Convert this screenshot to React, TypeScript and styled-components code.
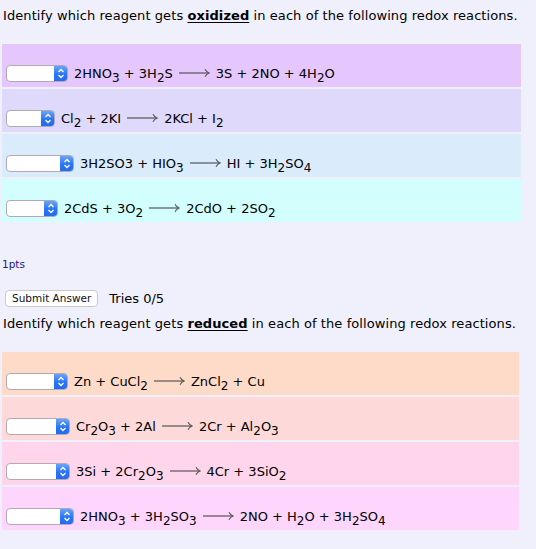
import React from 'react';
import styled, { createGlobalStyle } from 'styled-components';

const Global = createGlobalStyle`
  html, body { margin: 0; padding: 0; background: #eff0fc; }
  body { font-family: "DejaVu Sans", Verdana, sans-serif; color: #000; }
`

type Part = string | [string, string]
type Reaction = { left: Part[]; right: Part[]; pick: number; bg: string }

// plain text, or [text, subscript]
const oxidized: Reaction[] = [
  { bg: '#e5c6fd', pick: 62, left: [['2HNO', '3'], ' + 3H', ['', '2'], 'S'], right: ['3S + 2NO + 4H', ['', '2'], 'O'] },
  { bg: '#dfd9fb', pick: 49, left: [['Cl', '2'], ' + 2KI'], right: ['2KCl + I', ['', '2']] },
  { bg: '#daebfc', pick: 68, left: ['3H2SO3 + HIO', ['', '3']], right: ['HI + 3H', ['', '2'], 'SO', ['', '4']] },
  { bg: '#d3fefe', pick: 52, left: ['2CdS + 3O', ['', '2']], right: ['2CdO + 2SO', ['', '2']] },
]

const reduced: Reaction[] = [
  { bg: '#fedbc9', pick: 62, left: ['Zn + CuCl', ['', '2']], right: ['ZnCl', ['', '2'], ' + Cu'] },
  { bg: '#fed9d9', pick: 64, left: ['Cr', ['', '2'], 'O', ['', '3'], ' + 2Al'], right: ['2Cr + Al', ['', '2'], 'O', ['', '3']] },
  { bg: '#fed5eb', pick: 64, left: ['3Si + 2Cr', ['', '2'], 'O', ['', '3']], right: ['4Cr + 3SiO', ['', '2']] },
  { bg: '#fed5fc', pick: 68, left: ['2HNO', ['', '3'], ' + 3H', ['', '2'], 'SO', ['', '3']], right: ['2NO + H', ['', '2'], 'O + 3H', ['', '2'], 'SO', ['', '4']] },
]

const Formula = ({ parts }: { parts: Part[] }) => <span>
  {parts.map((p, i) => typeof p === 'string'
    ? <React.Fragment key={i}>{p.replace(/ /g, '\u00a0')}</React.Fragment>
    : <React.Fragment key={i}>{p[0]}<Sub>{p[1]}</Sub></React.Fragment>)}
</span>

const Arrow = () => <ArrowBox width='31' height='10' viewBox='0 0 31 10'>
  <line x1='0' y1='5' x2='29.5' y2='5' stroke='#555' strokeWidth='1.2' />
  <path d='M26 1.2 Q27.6 4 30 5 Q27.6 6 26 8.8' fill='none' stroke='#555' strokeWidth='1.1' />
</ArrowBox>

const Picker = ({ width }: { width: number }) => <Select $w={width}>
  <span className='field' />
  <span className='knob'>
    <svg width='8' height='11' viewBox='0 0 8 11'>
      <path d='M1.5 4 L4 1.5 L6.5 4 M1.5 7 L4 9.5 L6.5 7' fill='none' stroke='#fff' strokeWidth='1.3' />
    </svg>
  </span>
</Select>

const Section = ({ rows, width }: { rows: Reaction[]; width: number }) => <Rows $w={width}>
  {rows.map((r, i) => <Row key={i} $bg={r.bg}>
    <Picker width={r.pick} />
    <Equation>
      <Formula parts={r.left} />
      <Arrow />
      <Formula parts={r.right} />
    </Equation>
  </Row>)}
</Rows>

export default function App() {
  return <Page>
    <Global />
    <Prompt>Identify which reagent gets <b>oxidized</b> in each of the following redox reactions.</Prompt>
    <Section rows={oxidized} width={519} />
    <Points>1pts</Points>
    <Actions>
      <Button>Submit Answer</Button>
      <span>Tries 0/5</span>
    </Actions>
    <Prompt $top={9}>Identify which reagent gets <b>reduced</b> in each of the following redox reactions.</Prompt>
    <Section rows={reduced} width={517} />
  </Page>
}

const Page = styled.div`
  width: 536px; height: 549px;
  box-sizing: border-box;
  padding: 0 0 0 2px;
  overflow: hidden;
`

const Prompt = styled.div<{ $top?: number }>`
  margin-top: ${p => p.$top ?? 8}px;
  padding-left: 1px;
  font-size: 13px;
  line-height: 16px;
  letter-spacing: 0.08px;
  white-space: nowrap;
  b { text-decoration: underline; text-underline-offset: 2px; }
`

const Rows = styled.div<{ $w: number }>`
  display: flex;
  flex-direction: column;
  gap: 2px;
  width: ${p => p.$w}px;
  margin-top: 20px;
`

const Row = styled.div<{ $bg: string }>`
  display: flex;
  align-items: flex-end;
  gap: 6px;
  height: 43px;
  box-sizing: border-box;
  padding: 0 0 5px 4px;
  background: ${p => p.$bg};
`

const Select = styled.span<{ $w: number }>`
  display: flex;
  width: ${p => p.$w}px;
  height: 17px;
  box-sizing: border-box;
  border: 1px solid #b3a9b3;
  border-radius: 4px;
  overflow: hidden;
  background: #fff;
  .field { flex: 1; }
  .knob {
    width: 14px;
    display: flex; align-items: center; justify-content: center;
    background: linear-gradient(#6faaf9, #2a74f4 55%, #1f6af2);
    margin: -1px -1px -1px 0;
  }
`

const Equation = styled.div`
  display: flex;
  align-items: center;
  gap: 5px;
  height: 18px;
  font-size: 13px;
  white-space: nowrap;
`

const Sub = styled.span`
  font-size: 12px;
  position: relative;
  top: 4px;
`

const ArrowBox = styled.svg`
  display: block;
  margin: 0 1px;
`

const Points = styled.div`
  margin-top: 36px;
  font-size: 10.5px;
  line-height: 13px;
  color: #21168f;
`

const Actions = styled.div`
  display: flex;
  align-items: center;
  gap: 11px;
  margin-top: 19px;
  padding-left: 3px;
  height: 17px;
  font-size: 13px;
`

const Button = styled.button`
  height: 17px;
  padding: 0 6px;
  font-family: "DejaVu Sans", Verdana, sans-serif;
  font-size: 10.5px;
  line-height: 15px;
  color: #111;
  background: #fff;
  border: 1px solid #c9c9c9;
  border-radius: 4px;
`
